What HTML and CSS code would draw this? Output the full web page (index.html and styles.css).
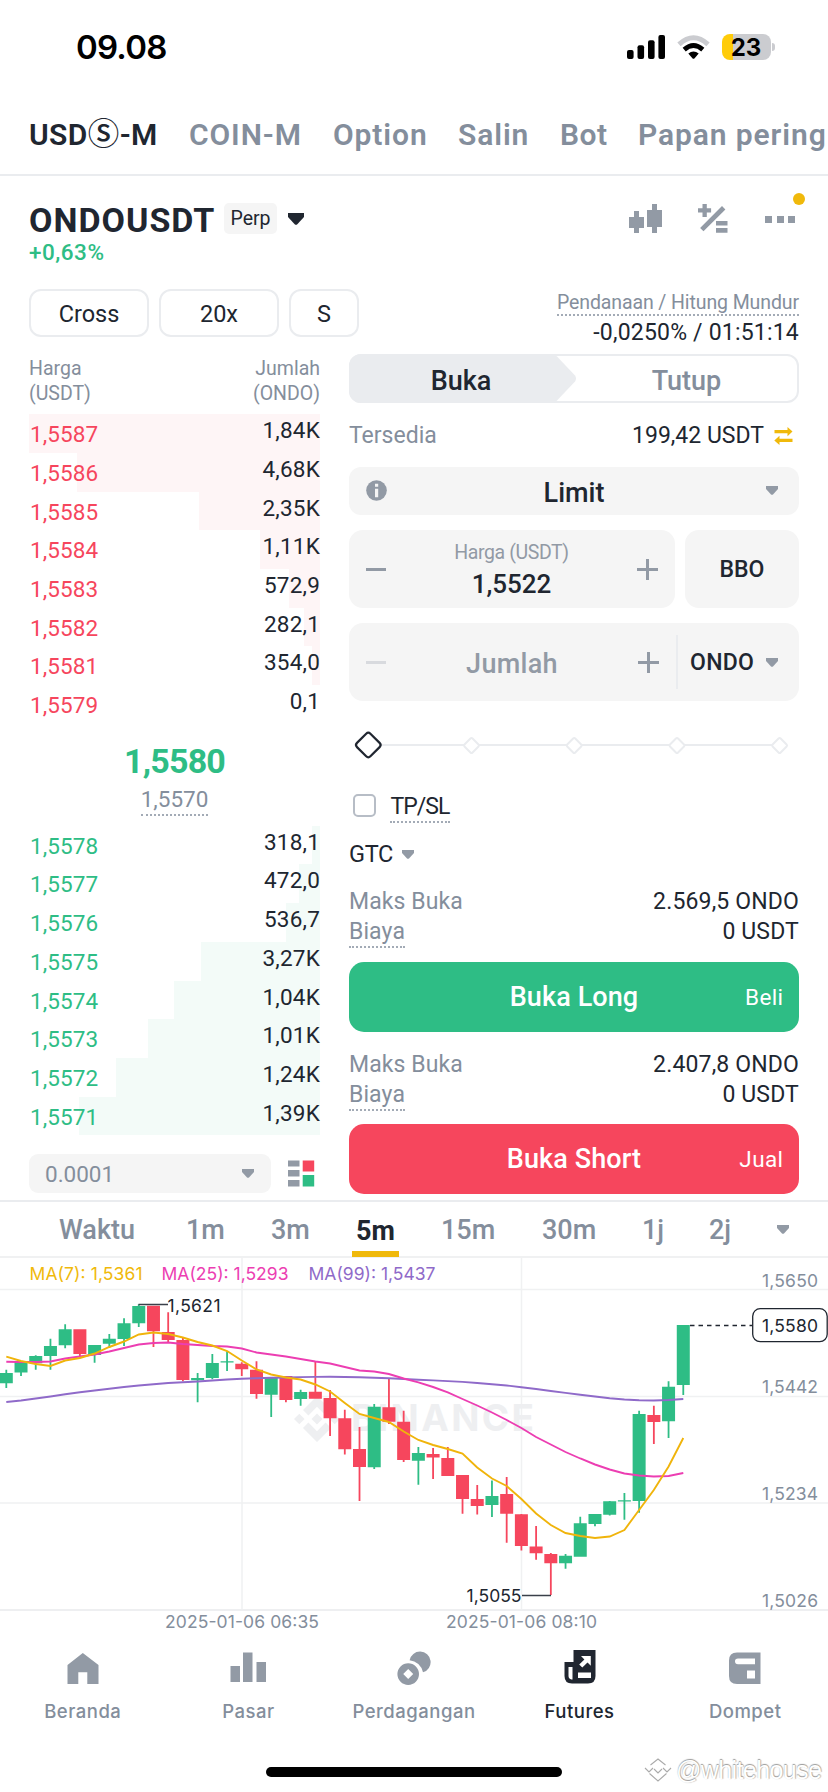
FILE: index.html
```html
<!DOCTYPE html>
<html lang="id">
<head>
<meta charset="utf-8">
<title>ONDOUSDT Perp</title>
<link rel="stylesheet" href="styles.css">
</head>
<body>
<svg width="0" height="0" class="defs">
  <symbol id="caret" viewBox="0 0 12 9"><path d="M0 0h12v3L7 8.4q-1 .9-2 0L0 3z" fill="currentColor"/></symbol>
  <symbol id="plus" viewBox="0 0 21 21"><path d="M0 9h9V0h3v9h9v3h-9v9H9v-9H0z" fill="currentColor"/></symbol>
  <symbol id="brand" viewBox="0 0 46 46"><path d="M23 0l14 14-5.4 5.4L23 10.8l-8.6 8.6L9 14zM5.3 17.7L10.6 23l-5.3 5.3L0 23zM40.7 17.7L46 23l-5.3 5.3-5.3-5.3zM23 17.6l5.4 5.4-5.4 5.4-5.4-5.4zM23 46L9 32l5.4-5.4 8.6 8.6 8.6-8.6L37 32z" fill="currentColor"/></symbol>
</svg>
<div class="phone">
  <header class="status">
    <span class="clock">09.08</span>
    <span class="status-icons">
      <svg width="38" height="24" viewBox="0 0 38 24"><rect y="15" width="6.6" height="9" rx="2"/><rect x="10.5" y="10.3" width="6.6" height="13.7" rx="2"/><rect x="21" y="5.2" width="6.6" height="18.8" rx="2"/><rect x="31.4" width="6.6" height="24" rx="2"/></svg>
      <svg class="wifi" width="33" height="24" viewBox="0 0 33 24" fill="none"><path d="M2 9.3Q16.5-3.8 31 9.3" stroke="#cbccd0" stroke-width="5"/><path d="M7.2 14.6Q16.5 6.6 25.8 14.6" stroke="#000" stroke-width="4.8"/><path d="M11.3 18.6Q16.5 14.2 21.7 18.6L17.4 23.4q-.9.8-1.8 0z" fill="#000"/></svg>
      <span class="battery"><b>23</b></span><i class="nub"></i>
    </span>
  </header>

  <nav class="tabs">
    <span class="tab tab-on">USD<span class="circled">Ⓢ</span>-M</span><span class="tab t2">COIN-M</span><span class="tab t3">Option</span><span class="tab t4">Salin</span><span class="tab t5">Bot</span><span class="tab t6">Papan pering</span>
  </nav>

  <section class="pair">
    <div class="pair-row">
      <h1>ONDOUSDT</h1><span class="badge">Perp</span><svg class="pair-caret" width="16" height="12"><use href="#caret"/></svg>
      <div class="tools">
        <svg width="33" height="30" viewBox="0 0 33 30" fill="#929aa5"><path d="M5 7h5v6h5v11h-5v5H5v-5H0V13h5zM23 0h5v6h5v17h-5v6h-5v-6h-5V6h5z"/></svg>
        <svg width="30" height="30" viewBox="0 0 30 30" fill="#929aa5"><path d="M4.5 0h4.3v4.3h4.3v4.3H8.800v4.300H4.500V8.600H0V4.300h4.500zM24 2l3.400 3.400L5.500 27.300 2.100 23.900zM18 17h11.500v4.500H18zM18 24h11.500v4.700H18z"/></svg>
        <span class="more"><i></i><i></i><i></i></span>
      </div>
    </div>
    <div class="change">+0,63%</div>
  </section>

  <section class="modes">
    <span class="mode">Cross</span><span class="mode">20x</span><span class="mode mode-s">S</span>
    <div class="funding"><span class="dotted">Pendanaan / Hitung Mundur</span><b>-0,0250% / 01:51:14</b></div>
  </section>

  <main class="trade">
    <section class="book">
      <div class="book-head"><span>Harga<br>(USDT)</span><span>Jumlah<br>(ONDO)</span></div>
      <div class="asks">
        <div class="lvl" style="--d:291px"><b>1,5587</b><span>1,84K</span></div>
        <div class="lvl" style="--d:243px"><b>1,5586</b><span>4,68K</span></div>
        <div class="lvl" style="--d:121.5px"><b>1,5585</b><span>2,35K</span></div>
        <div class="lvl" style="--d:60.5px"><b>1,5584</b><span>1,11K</span></div>
        <div class="lvl" style="--d:31.5px"><b>1,5583</b><span>572,9</span></div>
        <div class="lvl" style="--d:16.5px"><b>1,5582</b><span>282,1</span></div>
        <div class="lvl" style="--d:8.5px"><b>1,5581</b><span>354,0</span></div>
        <div class="lvl" style="--d:0px"><b>1,5579</b><span>0,1</span></div>
      </div>
      <div class="last"><strong>1,5580</strong><span class="dotted">1,5570</span></div>
      <div class="bids">
        <div class="lvl" style="--d:8.5px"><b>1,5578</b><span>318,1</span></div>
        <div class="lvl" style="--d:21px"><b>1,5577</b><span>472,0</span></div>
        <div class="lvl" style="--d:34px"><b>1,5576</b><span>536,7</span></div>
        <div class="lvl" style="--d:119px"><b>1,5575</b><span>3,27K</span></div>
        <div class="lvl" style="--d:146px"><b>1,5574</b><span>1,04K</span></div>
        <div class="lvl" style="--d:172.5px"><b>1,5573</b><span>1,01K</span></div>
        <div class="lvl" style="--d:204px"><b>1,5572</b><span>1,24K</span></div>
        <div class="lvl" style="--d:241px"><b>1,5571</b><span>1,39K</span></div>
      </div>
      <div class="book-foot">
        <span class="tick">0.0001<svg width="12" height="9"><use href="#caret"/></svg></span>
        <svg width="27" height="27" viewBox="0 0 27 27"><path d="M0 .5h11.500v6H0zM0 10h11.500v6.500H0zM0 20h11.500v6.500H0z" fill="#929aa5"/><path d="M14.700.5h11.500v11H14.700z" fill="#f6465d"/><path d="M14.700 15h11.500v11.500H14.700z" fill="#2ebd85"/></svg>
      </div>
    </section>

    <section class="order">
      <div class="side"><span class="open">Buka</span><span class="close">Tutup</span>
        <svg class="chevron" width="26" height="49" viewBox="0 0 26 49"><path d="M0 0h1.500Q4 .5 6 2.500L24 21.500q2 3 0 6L6 46.500Q4 48.500 1.500 49H0z" fill="#eaecef"/></svg></div>
      <div class="avail"><span>Tersedia</span><b>199,42 USDT</b><svg width="19" height="18" viewBox="0 0 19 18" fill="#f0b90b"><path d="M.5 3h13V0L18.500 4.600 13.500 9.200V6.200H.5zM18.500 11.800h-13V8.800L.3 13.400l5.200 4.600v-3h13z"/></svg></div>
      <div class="field type"><svg width="21" height="21" viewBox="0 0 21 21"><circle cx="10.500" cy="10.500" r="10.300" fill="#929aa5"/><path d="M9 3.700h3.200v3H9zM9 8.800h3.200v8.400H9z" fill="#f5f5f5"/></svg><span>Limit</span><svg class="car" width="12" height="9"><use href="#caret"/></svg></div>
      <div class="price-row">
        <div class="field stepper"><i class="minus"></i><div class="val"><small>Harga (USDT)</small><b>1,5522</b></div><svg width="21" height="21"><use href="#plus"/></svg></div>
        <div class="field bbo">BBO</div>
      </div>
      <div class="field amount"><i class="minus off"></i><span class="ph">Jumlah</span><svg width="21" height="21"><use href="#plus"/></svg><span class="unit">ONDO</span><svg class="car" width="12" height="9"><use href="#caret"/></svg></div>
      <svg class="slider" width="450" height="30" viewBox="349 730 450 30" fill="none"><path d="M382 745h398" stroke="#eaecef" stroke-width="2"/>
        <g fill="#fff" stroke="#eaecef" stroke-width="2"><rect x="465.800" y="739.800" width="11.400" height="11.400" rx="1.500" transform="rotate(45 471.500 745.500)"/><rect x="568.500" y="739.800" width="11.400" height="11.400" rx="1.500" transform="rotate(45 574.200 745.500)"/><rect x="671.300" y="739.800" width="11.400" height="11.400" rx="1.500" transform="rotate(45 677 745.500)"/><rect x="773.900" y="739.800" width="11.400" height="11.400" rx="1.500" transform="rotate(45 779.600 745.500)"/></g>
        <rect x="358.800" y="735.500" width="19" height="19" rx="3" transform="rotate(45 368.300 745)" fill="#fff" stroke="#202630" stroke-width="2.200"/></svg>
      <div class="tpsl"><i class="check"></i><span class="dotted">TP/SL</span></div>
      <div class="tif">GTC<svg width="12" height="9"><use href="#caret"/></svg></div>
      <div class="kv kv1"><span>Maks Buka</span><b>2.569,5 ONDO</b></div>
      <div class="kv kv2"><span class="dotted">Biaya</span><b>0 USDT</b></div>
      <div class="cta long"><span>Buka Long</span><em>Beli</em></div>
      <div class="kv kv1"><span>Maks Buka</span><b>2.407,8 ONDO</b></div>
      <div class="kv kv2"><span class="dotted">Biaya</span><b>0 USDT</b></div>
      <div class="cta short"><span>Buka Short</span><em>Jual</em></div>
    </section>
  </main>

  <nav class="intervals">
    <span class="wk">Waktu</span><span class="i1">1m</span><span class="i3">3m</span><span class="i5">5m</span><span class="i15">15m</span><span class="i30">30m</span><span class="ih">1j</span><span class="ih2">2j</span><svg width="12" height="9"><use href="#caret"/></svg>
  </nav>

  <svg class="chart" width="828" height="382" viewBox="0 1258 828 382">
    <path d="M0 1289.500h828M0 1396.500h828M0 1503h828M242 1258v352M521.500 1258v352" stroke="#f0f1f2" stroke-width="1.500"/>
    <path d="M0 1610h828" stroke="#eeeff1" stroke-width="2"/>
    <use href="#brand" x="294" y="1396" width="46" height="46" class="mark"/>
    <text x="351" y="1431" textLength="183" class="mark-text">BINANCE</text>
    <g id="candles"></g>
    <g class="lines"><polyline id="ma99" stroke="#8f6ac9"/><polyline id="ma25" stroke="#ec3eb2"/><polyline id="ma7" stroke="#f0b40b"/></g>
    <g class="ma">
      <text x="29.500" y="1279.500" textLength="113" fill="#f0b90b">MA(7): 1,5361</text>
      <text x="161.500" y="1279.500" textLength="127" fill="#ec3eb2">MA(25): 1,5293</text>
      <text x="308.500" y="1279.500" textLength="127" fill="#8f6ac9">MA(99): 1,5437</text>
    </g>
    <path d="M138.500 1304.500H168M522 1595.500h29" stroke="#3a404a" stroke-width="1.400"/>
    <g class="dark"><text x="167.500" y="1311.500" textLength="53">1,5621</text><text x="466.500" y="1602" textLength="55">1,5055</text></g>
    <path d="M690 1325.500h62" stroke="#202630" stroke-width="1.500" stroke-dasharray="4.500 4"/>
    <rect x="752.700" y="1308.700" width="74.500" height="33" rx="7.500" fill="#fff" stroke="#202630" stroke-width="1.300"/>
    <text x="762" y="1332" textLength="56" class="now">1,5580</text>
    <g class="axis">
      <text x="762" y="1286.500" textLength="56">1,5650</text><text x="762" y="1393" textLength="56">1,5442</text><text x="762" y="1500" textLength="56">1,5234</text><text x="762" y="1607" textLength="56">1,5026</text>
      <text x="165" y="1627.500" textLength="154">2025-01-06 06:35</text><text x="446" y="1627.500" textLength="151">2025-01-06 08:10</text>
    </g>
  </svg>

  <nav class="bottom">
    <a><svg width="34" height="34" viewBox="0 0 34 34"><path d="M16.800 3L32.500 15v19H21.300V22.300h-9V34H1.500V15z"/></svg>Beranda</a>
    <a><svg width="36" height="34" viewBox="0 0 36 34"><path d="M.5 16h9.500v16H.5zM13 2.500h9.500V32H13zM26.500 12H36v20h-9.500z"/></svg>Pasar</a>
    <a><svg width="34" height="36" viewBox="0 0 34 36" class="coins"><path d="M12.600 10.200A10.600 10.600 0 1 1 26 22.300 15 15 0 0 0 12.600 10.200z"/><path fill-rule="evenodd" d="M11.200 13.300a10.800 10.800 0 1 1 0 21.600 10.800 10.800 0 0 1 0-21.600zM11.200 19l-5 5 5 5 5-5z"/></svg>Perdagangan</a>
    <a class="on"><svg width="32" height="34" viewBox="0 0 32 34"><path fill-rule="evenodd" d="M9.500 0H31.500V26Q31.500 33.500 24 33.500H8Q.5 33.500 .5 26V12H9.500zM4.500 17v9q0 2.500 3 3.500h1V17zM14 22.500h13V28H14zM17 6h9.800v9.800l-3.300-3.300-5.200 5-3.100-3.100 5.200-5z"/></svg>Futures</a>
    <a><svg width="32" height="34" viewBox="0 0 32 34"><path fill-rule="evenodd" d="M8 2.500H31.500V34H8Q0 34 0 26V10.500Q0 2.500 8 2.500zM9 8.500Q6 8.500 6 11.300 6 14.300 9 14.300H26V8.500zM18 20.500h8v8h-8z"/></svg>Dompet</a>
  </nav>
  <div class="home-bar"></div>
  <div class="credit"><svg width="28" height="24" viewBox="0 0 28 24"><path d="M6.500 7L14 1l7.500 6M1 10l4 4 4-4M10 11l4 4 4-4M19 10l4 4 4-4M5.500 15.500L14 23l8.500-7.500" fill="none" stroke="#aaa" stroke-width="1.100"/></svg><span>@whitehouse</span></div>
</div>
<script src="chart.js"></script>
</body>
</html>
```
FILE: styles.css
```css
* { box-sizing: border-box; }
body { margin: 0; background: #fff; }
b, i, em, strong, small, h1 { font: inherit; margin: 0; }
svg { display: block; flex: none; }
.defs { position: absolute; }
.phone { position: relative; width: 828px; height: 1792px; overflow: hidden; display: flex; flex-direction: column; font-family: Roboto, "Noto Sans", sans-serif; color: #202630; white-space: nowrap; }
.phone > * { flex: none; }

.status { height: 94px; padding: 0 53px 0 76px; display: flex; justify-content: space-between; align-items: center; color: #000; font-family: Inter, sans-serif; }
.clock { font-size: 33px; font-weight: 600; letter-spacing: -.8px; line-height: 40px; }
.status-icons { display: flex; align-items: center; }
.wifi { margin: 0 12px; }
.battery { width: 49px; height: 26px; border-radius: 8px; background: linear-gradient(90deg, #ffcc0a 11.5px, #cbccd0 11.5px); font-size: 24px; line-height: 27px; text-align: center; }
.battery b { font-weight: 700; }
.nub { width: 3px; height: 8px; margin-left: 1.5px; border-radius: 0 3px 3px 0; background: #cbccd0; }

.tabs { height: 82px; padding: 2px 0 0 29px; border-bottom: 2px solid #eaecef; display: flex; align-items: center; font-size: 30px; font-weight: 600; color: #848e9c; line-height: 40px; letter-spacing: .9px; }
.tab { flex: none; }
.tab-on { color: #202630; width: 160px; letter-spacing: .4px; }
.circled { font-family: "Noto Sans CJK JP", sans-serif; font-size: 31.5px; font-weight: 500; line-height: 1; }
.t2 { width: 144px; }
.t3 { width: 125px; }
.t4 { width: 102px; }
.t5 { width: 78px; letter-spacing: .5px; }

.pair { padding: 20px 29px 0; height: 113px; }
.pair-row { height: 45px; display: flex; align-items: center; }
.pair h1 { font-size: 34px; font-weight: 700; width: 195px; line-height: 40px; padding-top: 3px; letter-spacing: 1px; }
.badge { width: 53px; height: 31px; border-radius: 5px; background: #f5f5f5; text-align: center; font-size: 19.5px; line-height: 32px; }
.pair-caret { margin-left: 11px; }
.tools { margin-left: auto; display: flex; align-items: center; gap: 36px; }
.more { position: relative; display: flex; gap: 4.5px; width: 34px; margin-left: 1px; padding-top: 1px; }
.more i { width: 7px; height: 7px; background: #929aa5; }
.more::after { content: ""; position: absolute; left: 28px; top: -22px; width: 12px; height: 12px; border-radius: 6px; background: #f0b90b; }
.change { font-size: 22.5px; line-height: 22px; color: #2ebd85; font-weight: 500; letter-spacing: .5px; }

.modes { height: 48px; padding: 0 29px; display: flex; gap: 10px; position: relative; }
.mode { width: 120px; height: 48px; border: 2px solid #eaecef; border-radius: 12px; text-align: center; font-size: 23.5px; line-height: 47px; }
.mode-s { width: 70px; }
.funding { margin-left: auto; height: 60px; display: flex; flex-direction: column; align-items: flex-end; font-size: 19.5px; line-height: 27px; color: #848e9c; }
.funding .dotted { letter-spacing: -.1px; height: 27px; }
.funding b { color: #202630; font-size: 23px; line-height: 30px; padding-top: 2px; letter-spacing: .2px; }
.dotted { border-bottom: 2px dotted #a3abb6; }

.trade { display: flex; padding: 0 29px; gap: 29px; height: 865px; border-bottom: 2px solid #eaecef; }
.book { width: 291px; padding-top: 19px; display: flex; flex-direction: column; }
.book-head { display: flex; justify-content: space-between; font-size: 19.5px; line-height: 25px; height: 58.3px; color: #848e9c; }
.book-head span + span { text-align: right; }
.lvl { height: 38.7px; display: flex; justify-content: space-between; font-size: 22.5px; line-height: 26px; padding: 3px 0 0 1px; letter-spacing: .2px; background: linear-gradient(var(--tint), var(--tint)) right top / var(--d) 100% no-repeat; }
.lvl b { color: var(--ink); padding-top: 4px; letter-spacing: .1px; }
.asks { --ink: #f6465d; --tint: #fef5f6; }
.bids { --ink: #2ebd85; --tint: #f3fbf8; }
.last { height: 102px; padding-top: 17px; display: flex; flex-direction: column; align-items: center; }
.last strong { font-size: 34px; line-height: 40px; font-weight: 700; color: #2ebd85; letter-spacing: -.8px; }
.last span { font-size: 22.5px; line-height: 28px; height: 35px; padding-top: 4px; color: #848e9c; }
.book-foot { display: flex; align-items: center; gap: 17px; padding-top: 19px; }
.tick { width: 242px; height: 39px; border-radius: 9px; background: #f5f5f5; padding: 0 17px 0 16px; display: flex; align-items: center; justify-content: space-between; font-size: 22.5px; color: #848e9c; }
.tick svg, .car, .tif svg, .intervals svg { color: #929aa5; }

.order { width: 450px; padding-top: 17px; display: flex; flex-direction: column; }
.order > * { flex: none; }
.side { position: relative; height: 49px; border: 2px solid #eaecef; border-radius: 12px; display: flex; font-size: 27px; font-weight: 500; line-height: 50px; text-align: center; }
.open { width: 203px; margin: -2px 0 -2px -2px; border-radius: 12px 0 0 12px; background: #eaecef; padding: 2px 0 0 21px; }
.close { flex: 1; color: #848e9c; padding-left: 24px; }
.chevron { position: absolute; left: 200px; top: -2px; }
.avail { height: 63.5px; display: flex; align-items: center; font-size: 23px; padding-top: 2px; }
.avail span { color: #848e9c; }
.avail b { margin-left: auto; margin-right: 10px; }
.avail svg { margin-right: 6px; }
.field { background: #f5f5f5; border-radius: 14px; display: flex; align-items: center; }
.type { height: 48.5px; border-radius: 12px; padding: 0 21px 0 17px; justify-content: space-between; font-size: 27px; font-weight: 500; }
.type span { padding: 5px 5px 0 0; }
.price-row { display: flex; gap: 10px; margin-top: 15px; }
.stepper { width: 326px; height: 78px; padding: 0 17px; justify-content: space-between; color: #929aa5; }
.minus { width: 20px; height: 3px; background: #929aa5; }
.minus.off { background: #d8dade; }
.val { display: flex; flex-direction: column; align-items: center; }
.val small { font-size: 19.5px; line-height: 28px; letter-spacing: -.4px; padding-top: 2px; }
.val b { font-size: 26px; line-height: 34px; font-weight: 500; color: #202630; }
.bbo { width: 114px; justify-content: center; font-size: 23px; font-weight: 500; }
.amount { margin-top: 15px; height: 78px; padding: 0 21px 0 17px; color: #929aa5; }
.ph { flex: 1; text-align: center; font-size: 27px; font-weight: 500; padding-top: 3px; letter-spacing: .3px; }
.unit { margin-left: 17px; border-left: 2px solid #eaecef; height: 54px; line-height: 55px; width: 90px; padding-left: 12px; color: #202630; font-size: 23px; font-weight: 500; letter-spacing: .3px; }
.slider { margin-top: 29px; }
.tpsl { margin-top: 28px; display: flex; padding-left: 4px; height: 36px; align-items: flex-start; }
.check { width: 23px; height: 23px; margin-top: 6px; border: 2px solid #b7bdc6; border-radius: 5px; }
.tpsl .dotted { margin-left: 13.5px; height: 35px; font-size: 23px; line-height: 37px; padding: 0 1px; letter-spacing: -1px; }
.tif { height: 60px; display: flex; align-items: center; gap: 9px; font-size: 23.5px; letter-spacing: -.3px; }
.kv { display: flex; justify-content: space-between; font-size: 23px; align-items: flex-start; }
.kv span { color: #848e9c; letter-spacing: .1px; }
.kv b { letter-spacing: .15px; }
.kv1 { height: 31px; line-height: 35px; }
.kv2 { height: 46.5px; line-height: 34px; }
.kv2 .dotted { height: 33px; }
.cta { position: relative; height: 70px; margin-bottom: 15px; border-radius: 15px; display: flex; align-items: center; justify-content: center; color: #fff; font-size: 27px; font-weight: 500; letter-spacing: .1px; }
.cta em { position: absolute; right: 15.5px; font-size: 22.5px; font-weight: 400; letter-spacing: .4px; }
.long { background: #2ebd85; }
.short { background: #f6465d; }

.intervals { height: 56px; border-bottom: 2px solid #f0f1f2; display: flex; align-items: center; padding-left: 59px; font-size: 27px; font-weight: 500; color: #848e9c; line-height: 56px; }
.intervals span { padding-top: 2px; }
.wk { width: 127px; }
.i1 { width: 85px; }
.i3 { width: 81px; }
.i5 { width: 47px; color: #202630; font-weight: 700; height: 56px; border-bottom: 6px solid #f0b90b; text-align: center; margin-right: 42px; line-height: 56px; }
.i15 { width: 101px; }
.i30 { width: 100px; }
.ih { width: 67px; }
.ih2 { width: 68px; }

.chart { font-family: Inter, sans-serif; }
.chart text { font-size: 17.5px; }
.lines { fill: none; stroke-width: 1.9; }
.mark { color: #eeeff1; }
.chart .mark-text { font-size: 37px; font-weight: 700; fill: #eeeff1; }
.dark, .now { fill: #202630; }
.axis { fill: #848e9c; }

.bottom { display: flex; height: 105px; font-family: Inter, sans-serif; font-size: 18.5px; line-height: 24px; font-weight: 500; color: #848e9c; letter-spacing: .5px; }
.bottom a { flex: 1; display: flex; flex-direction: column; align-items: center; gap: 15px; padding-top: 10px; }
.bottom svg { fill: #929aa5; }
.bottom .coins { margin-bottom: -2px; }
.bottom .on { color: #202630; }
.bottom .on svg { fill: #202630; }
.home-bar { width: 296px; height: 10px; border-radius: 5px; background: #000; margin: 22px 0 0 266px; }
.credit { position: absolute; left: 644px; top: 1758px; display: flex; align-items: center; gap: 4px; font: 25px/24px "Liberation Sans", sans-serif; letter-spacing: -.6px; color: #fff; text-shadow: 0 -1px 1px #999, 1px 0 1px #bbb; }
```
FILE: chart.js
```js
// Each candle: direction, body top, body bottom, wick top, wick bottom (chart units).
const candles = [
  ['g',1373,1383.3,1369.7,1388],['g',1362,1372.5,1362,1376],['g',1356,1363.3,1355.3,1369.7],['g',1346,1356,1338.7,1369.7],
  ['g',1329.3,1345.3,1324.3,1348.3],['r',1329.3,1354,1329.3,1356.3],['g',1345,1355,1345,1362.7],['g',1338.7,1343.7,1334,1348],
  ['g',1323.3,1339,1318.3,1346],['g',1306,1323.3,1304.3,1327],['r',1305.7,1331.3,1305.7,1347],['r',1332,1340,1312.3,1342],
  ['r',1340,1380,1337.7,1381.3],['g',1378,1380.3,1373,1402.3],['g',1363,1378,1354,1379.3],['g',1361.3,1362.5,1351.3,1371],
  ['r',1363.7,1369.3,1362.3,1376],['r',1369.7,1394,1361.3,1398.7],['g',1377.3,1394.7,1377.3,1417],['r',1376,1400,1376,1402.3],
  ['g',1392,1399,1389.7,1405.7],['r',1391.7,1398.7,1362,1398.7],['r',1398,1418.3,1390,1436],['r',1418.3,1449.3,1409.7,1454.5],
  ['r',1449,1467,1427,1501],['g',1406.7,1467.3,1404,1469],['r',1407.3,1421.7,1378.7,1424],['r',1421.7,1460,1410.7,1462],
  ['g',1453,1460.7,1447,1484.7],['r',1454,1457.5,1448,1479],['r',1458,1476,1447,1476],['r',1475,1499,1475,1513.7],
  ['r',1499,1506,1485,1514.5],['g',1496,1505,1480.5,1517],['r',1494,1513.7,1477,1542.7],['r',1514.3,1546,1514,1550.5],
  ['r',1546.5,1553.3,1526,1559.7],['r',1554,1563.3,1553,1595],['g',1555.7,1563.3,1554,1568.7],['g',1523.3,1556.7,1516.7,1556.7],
  ['g',1514,1524,1514,1526.3],['g',1501.3,1514.7,1501,1515.5],['g',1500.3,1501.6,1493,1519.7],['g',1414,1501,1410.7,1512.7],
  ['r',1415,1422,1405.7,1444],['g',1386.7,1421.3,1381.3,1438],['g',1325,1385,1325,1395]
];
const ma7 = [1356.7,1361,1364,1366,1360.5,1358,1353.5,1347,1341.5,1334.5,1332.5,1334,1337.5,1342,1345.5,1351,1360.5,1369.5,1374.5,1377.5,1379.5,1384.5,1391.5,1403,1414,1418,1422,1431.5,1440,1445,1449,1453.5,1467.5,1478.5,1486,1499,1513.5,1525,1533,1536,1538,1536.5,1530,1510,1490,1466.5,1438];
const ma25 = [1361.7,1362,1362,1361.5,1358.5,1356.5,1354.5,1351.5,1348,1344.5,1343,1342.5,1344,1345,1346,1346.5,1348.5,1352.5,1354.5,1356.5,1359,1361.5,1363.5,1367,1370.5,1371.5,1374,1378.5,1382.3,1387,1392.3,1399,1405.5,1412.5,1420,1428,1437,1444.5,1452,1458.5,1464.5,1469.5,1473.5,1475.5,1476.5,1476,1473];
const ma99 = [1402,1400.5,1398.5,1396.5,1394.3,1392.3,1390.5,1388.7,1387,1385.5,1384.2,1383,1382.2,1381.5,1380.5,1379.5,1378.8,1378.2,1377.7,1377.5,1377.1,1376.9,1376.8,1377,1377.3,1377.7,1378.3,1379,1379.7,1380.4,1381.1,1381.9,1383,1384.2,1385.5,1387.2,1389,1391,1392.9,1394.7,1396.5,1398.2,1399.5,1400.2,1400.5,1400,1399];

const x = i => 6.3 + 14.717 * i;
const colors = { g: '#2ebd85', r: '#f6465d' };

document.getElementById('candles').innerHTML = candles.map(([k, t, b, wt, wb], i) =>
  `<path fill="${colors[k]}" d="M${(x(i) - 6.5).toFixed(2)} ${t}h13V${b}h-13zM${(x(i) - .9).toFixed(2)} ${wt}h1.8V${wb}h-1.8z"/>`
).join('');

for (const [id, ys] of Object.entries({ ma7, ma25, ma99 })) {
  document.getElementById(id).setAttribute('points', ys.map((y, i) => `${x(i).toFixed(1)},${y}`).join(' '));
}
```
